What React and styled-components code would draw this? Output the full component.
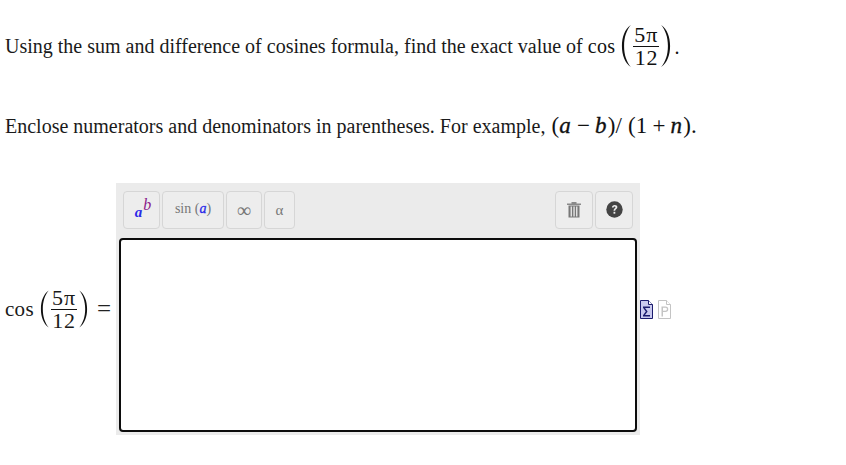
import React from "react";
import styled, { createGlobalStyle } from "styled-components";

const Global = createGlobalStyle`
  html, body { margin: 0; padding: 0; background: #fff; }
  body { font-family: "Liberation Serif", "Times New Roman", serif; font-size: 20px; color: #1a1a1a; }
`;

const Page = styled.div`
  width: 846px;
  height: 465px;
  overflow: hidden;
  padding: 25px 0 0 5px;
  box-sizing: border-box;
`;

const Line = styled.div`
  display: flex;
  align-items: center;
  height: ${(p) => p.$h}px;
  margin-bottom: ${(p) => p.$mb}px;
  white-space: pre;
  line-height: 24px;
`;

const MathInline = styled.span`
  display: inline-flex;
  align-items: center;
  font-family: "Liberation Serif", serif;
  color: #111;
`;

const Cos = styled.span`
  font-size: ${(p) => p.$size || 20}px;
  margin-right: ${(p) => p.$gap || 5}px;
  letter-spacing: ${(p) => p.$ls || 0}px;
`;

const Frac = styled.span`
  display: inline-flex;
  flex-direction: column;
  align-items: center;
  font-size: ${(p) => p.$size}px;
  margin: 0 1px;
`;

const Num = styled.span`
  display: block;
  padding: 0 1px 1px;
  border-bottom: 1px solid #111;
  line-height: ${(p) => p.$lh}px;
  letter-spacing: 1px;
`;

const Den = styled.span`
  display: block;
  line-height: ${(p) => p.$lh}px;
  letter-spacing: 0.6px;
`;

const Var = styled.i`
  -webkit-text-stroke: 0.35px currentColor;
  margin-right: 1px;
`;

const InlineFormula = styled.span`
  font-size: 23px;
  margin-left: 6px;
  color: #111;
  letter-spacing: 0.15px;
`;

const Op = styled.span`
  margin: 0 ${(p) => p.$m}px;
`;

const Period = styled.span`
  align-self: flex-end;
  margin: 0 0 9px 2px;
`;

const AnswerRow = styled.div`
  display: flex;
  align-items: center;
  height: 252px;
  margin-left: -5px;
`;

const Label = styled.div`
  width: 116px;
  box-sizing: border-box;
  padding-left: 5px;
  display: flex;
  align-items: center;
  flex: none;
`;

const Equals = styled.span`
  font-size: 25px;
  margin-left: 8px;
  color: #222;
`;

const Panel = styled.div`
  width: 524px;
  height: 252px;
  flex: none;
  background: #ebebeb;
  display: flex;
  flex-direction: column;
  box-sizing: border-box;
  padding: 0 3px 3px;
`;

const Toolbar = styled.div`
  height: 55px;
  flex: none;
  display: flex;
  justify-content: space-between;
  padding: 8px 4px 0;
  box-sizing: border-box;
`;

const Group = styled.div`
  display: flex;
  gap: 2px;
  height: 38px;
`;

const ToolButton = styled.div`
  width: ${(p) => p.$w}px;
  height: 38px;
  box-sizing: border-box;
  border: 1px solid #d6d6d6;
  border-radius: 4px;
  background: #ededed;
  color: #777;
  display: flex;
  align-items: center;
  justify-content: center;
  font-size: ${(p) => p.$fs || 14}px;
  white-space: pre;
  padding-bottom: ${(p) => p.$pb || 0}px;
`;

const Blue = styled.i`
  color: #2a2ae8;
  -webkit-text-stroke: 0.3px currentColor;
`;

const Sup = styled.span`
  display: flex;
  align-items: flex-start;
  font-style: italic;
  padding: 3px 0 0 3px;
  & > b {
    font-size: 16px;
    color: #8a1a8a;
    margin: -6px 0 0 1px;
    font-weight: 500;
  }
  & > i {
    font-size: 15px;
    color: #2a2ae8;
    margin-top: 2px;
    font-weight: 600;
  }
`;

const Editor = styled.div`
  flex: 1;
  background: #fff;
  border: 2px solid #0c0c0c;
  border-radius: 4px;
`;

const Files = styled.div`
  display: flex;
  gap: 5px;
  margin-top: 1px;
`;

const Paren = ({ h, flip }) => (
  <svg width={Math.round(h * 0.28)} height={h} viewBox="0 0 10 36" style={{ transform: flip ? "scaleX(-1)" : "none", flex: "none" }}>
    <path d="M9 .5C4 4 1.6 10.5 1.6 18S4 32 9 35.5C5.4 31 3.4 25.500 3.4 18S5.4 5 9 .5Z" fill="#111" />
  </svg>
);

const Fraction = ({ size, lh }) => (
  <Frac $size={size}>
    <Num $lh={lh}>5π</Num>
    <Den $lh={lh}>12</Den>
  </Frac>
);

const Trash = () => (
  <svg width="16" height="17" viewBox="0 0 16 17">
    <path d="M1 2.500h14v1.600H1zM5.500 1h5v1.500h-5z" fill="#8a8a8a" />
    <path d="M2.500 4.500h11V16.500h-11z" fill="#777" />
    <path d="M4.600 5.500h1.300v10H4.600zM7.400 5.500h1.300v10H7.400zM10.100 5.500h1.300v10h-1.300z" fill="#ededed" />
  </svg>
);

const Help = () => (
  <svg width="17" height="17" viewBox="0 0 17 17">
    <circle cx="8.500" cy="8.500" r="8.200" fill="#444" />
    <path d="M5.900 6.400c.1-1.600 1.200-2.500 2.800-2.500 1.600 0 2.700.9 2.700 2.200 0 1.900-2.200 1.900-2.200 3.700H7.500c0-2.400 2-2.400 2-3.600 0-.5-.4-.8-.9-.8-.6 0-.9.4-1 1Z" fill="#ededed" />
    <rect x="7.500" y="10.800" width="1.800" height="1.900" fill="#ededed" />
  </svg>
);

const FileIcon = ({ color, fill, letter }) => (
  <svg width="13" height="19" viewBox="0 0 13 19">
    <path d="M.5.500h8l4 4v14H.5z" fill={fill} stroke={color} />
    <path d="M8.500.500v4h4" fill="#fff" stroke={color} />
    {letter === "S" ? (
      <path d="M3 6.500h7v1.400H5l2.600 3.600L5 15h5v1.500H3v-1.200l2.800-3.800L3 7.700z" fill={color} />
    ) : (
      <path d="M3.500 6.500h4a2.500 2.500 0 0 1 0 5.500H5v4.500H3.500zM5 7.800V10.700h2.500a1.450 1.450 0 0 0 0-2.900z" fill={color} />
    )}
  </svg>
);

export default function App() {
  return (
    <>
      <Global />
      <Page>
        <Line $h={42} $mb={38}>
          Using the sum and difference of cosines formula, find the exact value of{" "}
          <MathInline>
            <Cos $ls={0.3}>cos</Cos>
            <Paren h={44} />
            <Fraction size={22} lh={21} />
            <Paren h={44} flip />
            <Period>.</Period>
          </MathInline>
        </Line>
        <Line $h={42} $mb={36}>
          Enclose numerators and denominators in parentheses. For example,
          <InlineFormula>
            (<Var>a</Var>
            <Op $m={5}>−</Op>
            <Var>b</Var>)/ (1<Op $m={5}>+</Op>
            <Var>n</Var>).
          </InlineFormula>
        </Line>
        <AnswerRow>
          <Label>
            <Cos $size={21} $gap={5} $ls={0.3}>cos</Cos>
            <Paren h={38} />
            <Fraction size={22} lh={21} />
            <Paren h={38} flip />
            <Equals>=</Equals>
          </Label>
          <Panel>
            <Toolbar>
              <Group>
                <ToolButton $w={37}>
                  <Sup>
                    <i>a</i>
                    <b>b</b>
                  </Sup>
                </ToolButton>
                <ToolButton $w={62} $pb={2}>
                  sin (<Blue>a</Blue>)
                </ToolButton>
                <ToolButton $w={36} $fs={20}>∞</ToolButton>
                <ToolButton $w={31} $fs={15}>α</ToolButton>
              </Group>
              <Group>
                <ToolButton $w={38} $pb={1}>
                  <Trash />
                </ToolButton>
                <ToolButton $w={38} $pb={1}>
                  <Help />
                </ToolButton>
              </Group>
            </Toolbar>
            <Editor />
          </Panel>
          <Files>
            <FileIcon color="#1c1c6e" fill="#c9c9ee" letter="S" />
            <FileIcon color="#c4c4c4" fill="#fff" letter="P" />
          </Files>
        </AnswerRow>
      </Page>
    </>
  );
}
